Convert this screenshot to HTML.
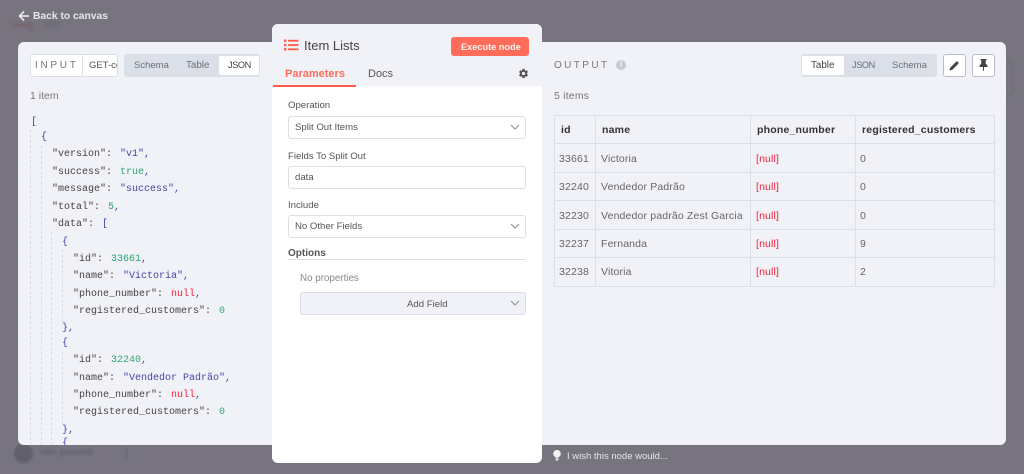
<!DOCTYPE html>
<html><head><meta charset="utf-8"><style>
html,body{margin:0;padding:0}
body{width:1024px;height:474px;overflow:hidden;position:relative;background:#77747f;font-family:"Liberation Sans",sans-serif;color:#555}
.t{position:absolute;white-space:nowrap;line-height:14px;height:14px}
.b{position:absolute;box-sizing:border-box}
.panel{position:absolute;background:#f1f2f8}
.m{position:absolute;white-space:pre;font:10px/14px "Liberation Mono",monospace;color:#444;height:14px}
.v{margin-left:2px}
.s{color:#4d3fa8}.n{color:#2fa56f}.r{color:#f0243c}
.g{position:absolute;width:0;border-left:1px dashed #d6dce9}
.in{position:absolute;box-sizing:border-box;background:#fff;border:1px solid #dbdfe7;border-radius:3px;left:288px;width:238px;height:23px}
.h{position:absolute;background:#dbdfe7}
.td{font-size:10.5px;color:#666;letter-spacing:.15px}
.th{font-size:10.5px;font-weight:bold;color:#333;letter-spacing:.2px}
.f{font-size:9.6px;color:#555}
.blur{filter:blur(1px)}
</style></head><body>
<!-- blurred background bits -->
<div class="b blur" style="left:11px;top:23px;width:22px;height:4px;border-radius:3px;background:#76686f"></div>
<div class="b blur" style="left:28px;top:26px;width:6px;height:6px;border-radius:50%;background:#776a72"></div>
<div class="t blur" style="left:44px;top:18px;font-size:10px;font-weight:bold;color:#6b6874">n8n</div>
<div class="b blur" style="left:1004px;top:61px;width:9px;height:35px;border:1px solid #6c6974;border-radius:4px"></div>
<div class="b blur" style="left:14px;top:444px;width:19px;height:19px;border-radius:50%;background:#625f6c"></div>
<div class="t blur" style="left:40px;top:446px;font-size:9.5px;font-weight:bold;color:#625f6b">n8n powerb</div>
<div class="h blur" style="left:126px;top:447px;width:1px;height:11px;background:#625f6b"></div>

<svg style="position:absolute;left:18px;top:10px" width="12" height="12" viewBox="0 0 12 12"><path d="M6 1.500 1.500 6 6 10.500M2 6h9" fill="none" stroke="#f4f4f6" stroke-width="1.500"/></svg>
<div class="t" style="left:33px;top:10px;font-size:10.300px;font-weight:bold;color:#e6e6ea">Back to canvas</div>

<!-- main panel -->
<div class="panel" style="left:18px;top:42px;width:988px;height:403px;border-radius:6px"></div>

<!-- input header -->
<div class="b" style="left:30px;top:54px;width:88px;height:23px;background:#fff;border:1px solid #dbdfe7;border-radius:3px"></div>
<div class="h" style="left:82px;top:55px;width:1px;height:21px"></div>
<div class="t" style="left:35px;top:59px;font-size:10px;color:#777;letter-spacing:2.700px">INPUT</div>
<div class="t" style="left:89px;top:59px;width:28px;overflow:hidden;font-size:9.500px;color:#555">GET-co</div>
<div class="b" style="left:124px;top:54px;width:136px;height:23px;background:#dbdfe7;border-radius:3px"></div>
<div class="b" style="left:219px;top:56px;width:40px;height:19px;background:#fff;border-radius:2px"></div>
<div class="t" style="left:134px;top:59px;font-size:9.500px;color:#6b6f78">Schema</div>
<div class="t" style="left:186px;top:59px;font-size:9.800px;color:#6b6f78">Table</div>
<div class="t" style="left:228px;top:58px;font-size:9.200px;letter-spacing:-.4px;color:#444">JSON</div>
<div class="t" style="left:30px;top:89px;font-size:10.500px;color:#777">1 item</div>

<!-- JSON guides -->
<div class="g" style="left:30px;top:130px;height:315px"></div>
<div class="g" style="left:41px;top:146px;height:299px"></div>
<div class="g" style="left:51px;top:232px;height:213px"></div>
<div class="g" style="left:62px;top:250px;height:72px"></div>
<div class="g" style="left:62px;top:352px;height:72px"></div>

<div class="m s" style="left:31px;top:116px">[</div>
<div class="m s" style="left:41px;top:131px">{</div>
<div class="m" style="left:52px;top:148px">"version": <span class="s v">"v1",</span></div>
<div class="m" style="left:52px;top:166px">"success": <span class="n v">true</span><span class="s">,</span></div>
<div class="m" style="left:52px;top:183px">"message": <span class="s v">"success",</span></div>
<div class="m" style="left:52px;top:201px">"total": <span class="n v">5</span><span class="s">,</span></div>
<div class="m" style="left:52px;top:218px">"data": <span class="s v">[</span></div>
<div class="m s" style="left:62px;top:236px">{</div>
<div class="m" style="left:73px;top:253px">"id": <span class="n v">33661</span><span class="s">,</span></div>
<div class="m" style="left:73px;top:270px">"name": <span class="s v">"Victoria",</span></div>
<div class="m" style="left:73px;top:288px">"phone_number": <span class="r v">null</span><span class="s">,</span></div>
<div class="m" style="left:73px;top:305px">"registered_customers": <span class="n v">0</span></div>
<div class="m s" style="left:62px;top:322px">},</div>
<div class="m s" style="left:62px;top:337px">{</div>
<div class="m" style="left:73px;top:354px">"id": <span class="n v">32240</span><span class="s">,</span></div>
<div class="m" style="left:73px;top:372px">"name": <span class="s v">"Vendedor Padrão",</span></div>
<div class="m" style="left:73px;top:389px">"phone_number": <span class="r v">null</span><span class="s">,</span></div>
<div class="m" style="left:73px;top:406px">"registered_customers": <span class="n v">0</span></div>
<div class="m s" style="left:62px;top:424px">},</div>
<div style="position:absolute;left:18px;top:436px;width:254px;height:9px;overflow:hidden"><div class="m s" style="left:44px;top:1px">{</div></div>

<!-- center panel -->
<div class="b" style="left:272px;top:24px;width:270px;height:439px;background:#fff;border-radius:6px;overflow:hidden">
  <div style="position:absolute;left:0;top:0;width:270px;height:62px;background:#f1f2f8"></div>
</div>
<svg style="position:absolute;left:284px;top:39px" width="15" height="12" viewBox="0 0 15 12"><g fill="#ff5c4a"><rect x="0" y="0.500" width="2.400" height="2.400"/><rect x="0" y="4.800" width="2.400" height="2.400"/><rect x="0" y="9.100" width="2.400" height="2.400"/><rect x="4" y="0.800" width="10.500" height="1.800"/><rect x="4" y="5.100" width="10.500" height="1.800"/><rect x="4" y="9.400" width="10.500" height="1.800"/></g></svg>
<div class="t" style="left:304px;top:39px;font-size:13px;color:#444">Item Lists</div>
<div class="b" style="left:451px;top:37px;width:78px;height:19px;background:#ff6d5a;border-radius:3px"></div>
<div class="t" style="left:461px;top:40px;font-size:9.200px;font-weight:bold;color:#fff0ec">Execute node</div>
<div class="t" style="left:285px;top:67px;font-size:11px;font-weight:bold;color:#ff6d5a">Parameters</div>
<div class="t" style="left:368px;top:67px;font-size:11px;color:#555">Docs</div>
<div class="h" style="left:273px;top:85px;width:83px;height:1.500px;background:#ff5c4a"></div>
<svg style="position:absolute;left:518px;top:68px" width="11" height="11" viewBox="0 0 24 24"><path fill="#555" d="M19.400 13a7.500 7.500 0 0 0 0-2l2.400-1.900-2.400-4.100-2.900 1.100a7.600 7.600 0 0 0-1.700-1L14.400 2H9.600l-.4 3.100a7.600 7.600 0 0 0-1.700 1L4.600 5 2.200 9.100 4.600 11a7.500 7.500 0 0 0 0 2l-2.400 1.900 2.400 4.100 2.900-1.100c.5.400 1.100.7 1.700 1L9.600 22h4.800l.4-3.100c.6-.3 1.200-.6 1.700-1l2.900 1.100 2.400-4.100zM12 15.500a3.500 3.500 0 1 1 0-7 3.500 3.500 0 0 1 0 7z"/></svg>

<div class="t f" style="left:288px;top:99px">Operation</div>
<div class="in" style="top:116px"></div>
<div class="t f" style="left:295px;top:121px">Split Out Items</div>
<svg style="position:absolute;left:510px;top:124px" width="10" height="6" viewBox="0 0 10 6"><path d="M1 1l4 4 4-4" fill="none" stroke="#8a8f9c" stroke-width="1"/></svg>
<div class="t f" style="left:288px;top:150px">Fields To Split Out</div>
<div class="in" style="top:166px"></div>
<div class="t f" style="left:295px;top:171px">data</div>
<div class="t f" style="left:288px;top:199px">Include</div>
<div class="in" style="top:215px"></div>
<div class="t f" style="left:295px;top:220px">No Other Fields</div>
<svg style="position:absolute;left:510px;top:223px" width="10" height="6" viewBox="0 0 10 6"><path d="M1 1l4 4 4-4" fill="none" stroke="#8a8f9c" stroke-width="1"/></svg>
<div class="t" style="left:288px;top:247px;font-size:10px;font-weight:bold;color:#555">Options</div>
<div class="h" style="left:288px;top:259px;width:238px;height:1px"></div>
<div class="t" style="left:300px;top:272px;font-size:9.800px;color:#888">No properties</div>
<div class="b" style="left:300px;top:292px;width:226px;height:23px;background:#f1f2f8;border:1px solid #dbdfe7;border-radius:3px"></div>
<div class="t f" style="left:407px;top:298px">Add Field</div>
<svg style="position:absolute;left:510px;top:300px" width="10" height="6" viewBox="0 0 10 6"><path d="M1 1l4 4 4-4" fill="none" stroke="#8a8f9c" stroke-width="1"/></svg>

<!-- output header -->
<div class="t" style="left:554px;top:59px;font-size:10px;color:#777;letter-spacing:2.400px">OUTPUT</div>
<div class="b" style="left:616px;top:60px;width:10px;height:10px;border-radius:50%;background:#c5c9d3;color:#fff;font:bold 8px/10px 'Liberation Sans',sans-serif;text-align:center">i</div>
<div class="b" style="left:801px;top:54px;width:136px;height:23px;background:#dbdfe7;border-radius:3px"></div>
<div class="b" style="left:802px;top:56px;width:42px;height:19px;background:#fff;border-radius:2px"></div>
<div class="t" style="left:811px;top:59px;font-size:9.800px;color:#444">Table</div>
<div class="t" style="left:852px;top:58px;font-size:9.200px;letter-spacing:-.4px;color:#6b6f78">JSON</div>
<div class="t" style="left:892px;top:59px;font-size:9.500px;color:#6b6f78">Schema</div>
<div class="b" style="left:943px;top:54px;width:23px;height:23px;background:#fff;border:1px solid #b9bcc6;border-radius:3px"></div>
<svg style="position:absolute;left:949px;top:60px" width="11" height="11" viewBox="0 0 11 11"><path d="M0.500 10.500l.6-2.800 6-6c.4-.4 1-.4 1.400 0l.8.8c.4.400.4 1 0 1.400l-6 6z" fill="#444"/></svg>
<div class="b" style="left:972px;top:54px;width:23px;height:23px;background:#fff;border:1px solid #b9bcc6;border-radius:3px"></div>
<svg style="position:absolute;left:979px;top:59px" width="9" height="12" viewBox="0 0 9 12"><path d="M1.500 0h6v1l-.8.6v3L8.500 6.500V8H5v3.500l-.5.500-.5-.5V8H.5V6.500l1.800-1.900v-3l-.8-.6z" fill="#444"/></svg>
<div class="t" style="left:554px;top:89px;font-size:10.500px;color:#777;letter-spacing:.2px">5 items</div>

<!-- table -->
<div class="b" style="left:554px;top:115px;width:441px;height:172px;border:1px solid #dbdfe7"></div>
<div class="h" style="left:595px;top:115px;width:1px;height:172px"></div>
<div class="h" style="left:750px;top:115px;width:1px;height:172px"></div>
<div class="h" style="left:855px;top:115px;width:1px;height:172px"></div>
<div class="h" style="left:554px;top:143px;width:441px;height:1px"></div>
<div class="h" style="left:554px;top:172px;width:441px;height:1px"></div>
<div class="h" style="left:554px;top:200px;width:441px;height:1px"></div>
<div class="h" style="left:554px;top:229px;width:441px;height:1px"></div>
<div class="h" style="left:554px;top:257px;width:441px;height:1px"></div>

<div class="t th" style="left:561px;top:123px">id</div>
<div class="t th" style="left:602px;top:123px">name</div>
<div class="t th" style="left:757px;top:123px">phone_number</div>
<div class="t th" style="left:862px;top:123px">registered_customers</div>

<div class="t td" style="left:559px;top:152px">33661</div><div class="t td" style="left:601px;top:152px">Victoria</div><div class="t td" style="left:756px;top:152px;color:#f0243c">[null]</div><div class="t td" style="left:860px;top:152px">0</div>
<div class="t td" style="left:559px;top:180px">32240</div><div class="t td" style="left:601px;top:180px">Vendedor Padrão</div><div class="t td" style="left:756px;top:180px;color:#f0243c">[null]</div><div class="t td" style="left:860px;top:180px">0</div>
<div class="t td" style="left:559px;top:209px">32230</div><div class="t td" style="left:601px;top:209px">Vendedor padrão Zest Garcia</div><div class="t td" style="left:756px;top:209px;color:#f0243c">[null]</div><div class="t td" style="left:860px;top:209px">0</div>
<div class="t td" style="left:559px;top:237px">32237</div><div class="t td" style="left:601px;top:237px">Fernanda</div><div class="t td" style="left:756px;top:237px;color:#f0243c">[null]</div><div class="t td" style="left:860px;top:237px">9</div>
<div class="t td" style="left:559px;top:265px">32238</div><div class="t td" style="left:601px;top:265px">Vitoria</div><div class="t td" style="left:756px;top:265px;color:#f0243c">[null]</div><div class="t td" style="left:860px;top:265px">2</div>

<!-- footer -->
<svg style="position:absolute;left:553px;top:450px" width="8" height="11" viewBox="0 0 8 11"><path d="M4 0a3.700 3.700 0 0 0-2.200 6.700c.4.300.6.700.6 1.100h3.200c0-.4.200-.8.6-1.100A3.700 3.700 0 0 0 4 0zM2.500 8.500h3v1l-.8 1H3.300l-.8-1z" fill="#f2f2f4"/></svg>
<div class="t" style="left:567px;top:450px;font-size:9.500px;color:#e4e4e8">I wish this node would...</div>
</body></html>
